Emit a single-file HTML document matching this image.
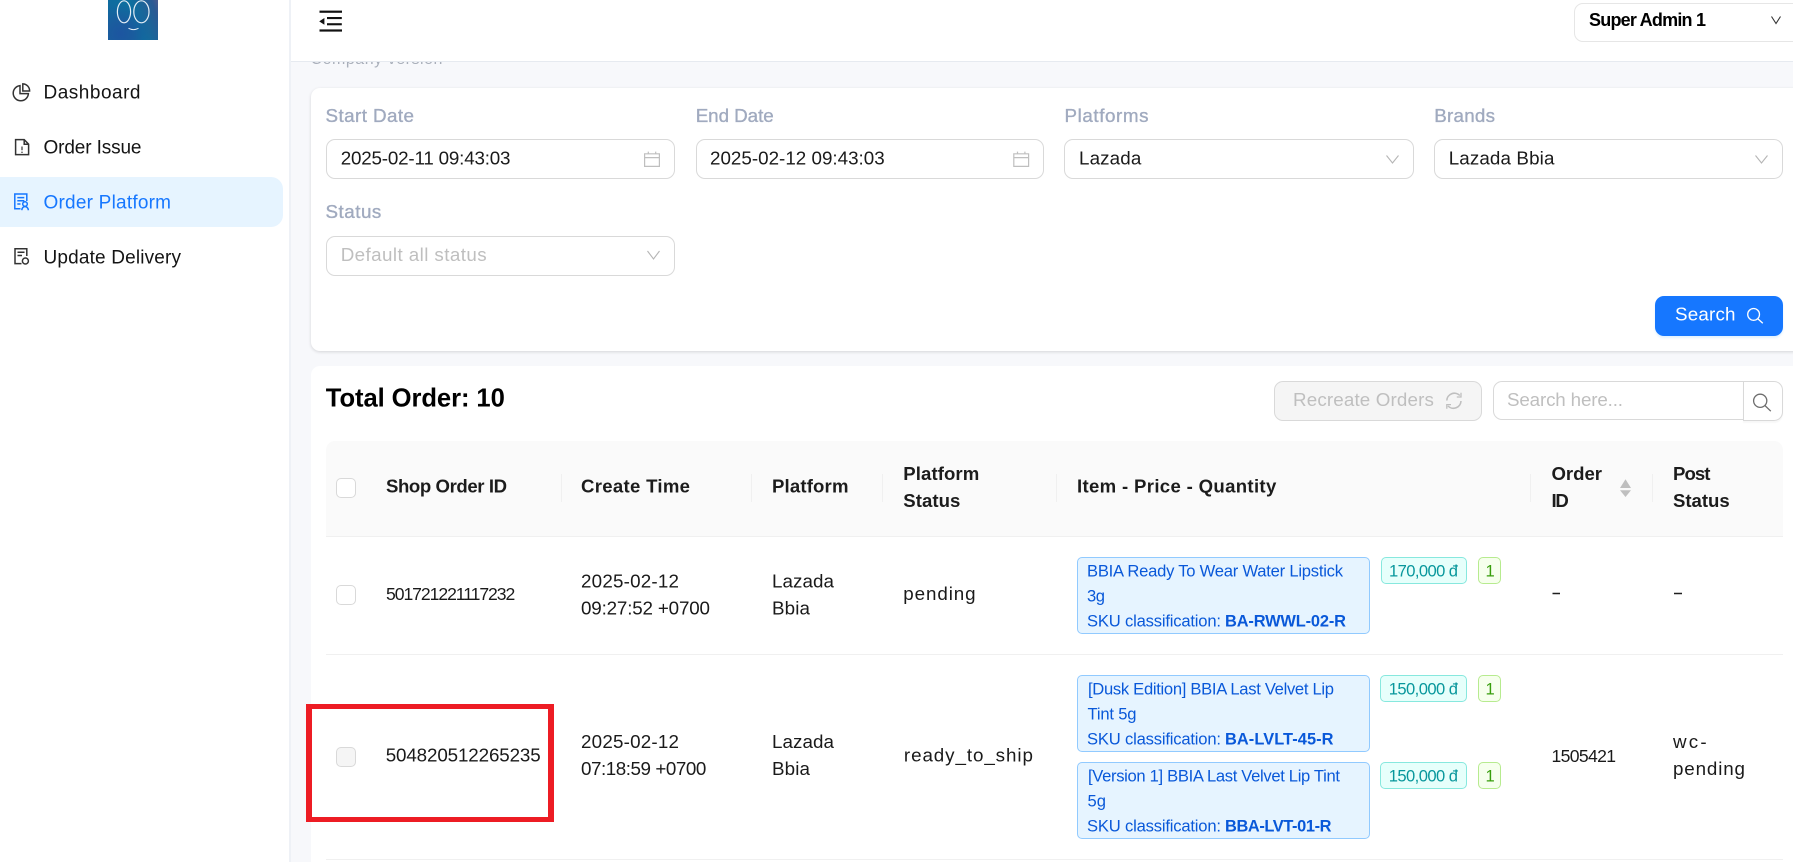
<!DOCTYPE html>
<html lang="en">
<head>
<meta charset="utf-8">
<title>Order Platform</title>
<style>
html,body{margin:0;padding:0;width:1793px;height:862px;overflow:hidden;background:#f7f8fb;font-family:"Liberation Sans",sans-serif}
#page{position:relative;width:1793px;height:862px;overflow:hidden;background:#f7f8fb}
.b{position:absolute;box-sizing:border-box}
.inp{background:#fff;border:1px solid #d9d9d9;border-radius:9px}
svg.layer{position:absolute;left:0;top:0;width:1793px;height:862px;font-family:"Liberation Sans",sans-serif}
svg text{white-space:pre}
.n{font-size:18.8px;fill:#1a1a1a}
.d{font-size:17.6px;fill:#1a1a1a}
.nav{font-size:19px;fill:#141414}
.lab{font-size:18.8px;fill:#a0aabf;stroke:#a0aabf;stroke-width:.35px}
.ph{font-size:18.8px;fill:#bfbfbf}
.h{font-size:18.6px;font-weight:bold;fill:#1c1c1c}
.it{font-size:16.6px;fill:#0958d9}
.itb{font-size:16.4px;font-weight:bold;fill:#0958d9}
.pr{font-size:16.6px;fill:#08979c}
.q{font-size:16.6px;fill:#389e0d}
</style>
</head>
<body>
<div id="page">
<!-- sidebar -->
<div class="b" style="left:0;top:0;width:291px;height:862px;background:#fff;border-right:2px solid #eef1f6"></div>
<div class="b" style="left:0;top:177px;width:283px;height:50px;background:#e6f4ff;border-radius:0 12px 12px 0"></div>
<div class="b" style="left:108px;top:0;width:50px;height:40px;background:radial-gradient(circle at 25% 85%,#1c55a0 0,#1a5c9e 25%,transparent 60%),linear-gradient(70deg,#10689f 0,#0d709f 55%,#2a5a94 90%,#4a5a8e 100%)"></div>
<!-- clipped text under the header -->
<div class="b" style="left:310.5px;top:50.5px;font-size:16px;line-height:18px;letter-spacing:.53px;color:#a9afba;white-space:nowrap">Company version</div>
<!-- header -->
<div class="b" style="left:291px;top:0;width:1502px;height:62px;background:#fff;border-bottom:1px solid #e6eaf0"></div>
<div class="b inp" style="left:1574px;top:3px;width:240px;height:39px;border-color:#e6e6e6"></div>
<!-- filter card -->
<div class="b" style="left:310.5px;top:88px;width:1500px;height:263px;background:#fff;border-radius:9px;box-shadow:0 1px 3px rgba(0,0,0,.14)"></div>
<div class="b inp" style="left:326px;top:139px;width:349px;height:40px"></div>
<div class="b inp" style="left:695.5px;top:139px;width:348.5px;height:40px"></div>
<div class="b inp" style="left:1064px;top:139px;width:350px;height:40px"></div>
<div class="b inp" style="left:1434px;top:139px;width:349px;height:40px"></div>
<div class="b inp" style="left:326px;top:236px;width:349px;height:40px"></div>
<div class="b" style="left:1655px;top:296px;width:128px;height:40px;background:#1677ff;border-radius:9px;box-shadow:0 2px 2px rgba(5,145,255,.12)"></div>
<!-- table card -->
<div class="b" style="left:310.5px;top:366px;width:1500px;height:496px;background:#fff;border-radius:9px 9px 0 0"></div>
<div class="b" style="left:1273.5px;top:381px;width:208px;height:40px;background:#f5f5f5;border:1px solid #d9d9d9;border-radius:9px"></div>
<div class="b inp" style="left:1492.5px;top:381px;width:252px;height:39px;border-radius:9px 0 0 9px"></div>
<div class="b inp" style="left:1743px;top:381px;width:39.5px;height:40px;border-radius:0 9px 9px 0;box-shadow:0 2px 1px rgba(0,0,0,.03)"></div>
<div class="b" style="left:326px;top:441px;width:1457px;height:96px;background:#fafafa;border-radius:9px 9px 0 0;border-bottom:1px solid #f0f0f0"></div>
<div class="b" style="left:326px;top:654px;width:1457px;height:1px;background:#f0f0f0"></div>
<div class="b" style="left:326px;top:859px;width:1457px;height:1px;background:#f0f0f0"></div>
<div class="b" style="left:561px;top:474px;width:1px;height:28px;background:#f0f0f0"></div>
<div class="b" style="left:751px;top:474px;width:1px;height:28px;background:#f0f0f0"></div>
<div class="b" style="left:882px;top:474px;width:1px;height:28px;background:#f0f0f0"></div>
<div class="b" style="left:1056px;top:474px;width:1px;height:28px;background:#f0f0f0"></div>
<div class="b" style="left:1530px;top:474px;width:1px;height:28px;background:#f0f0f0"></div>
<div class="b" style="left:1652px;top:474px;width:1px;height:28px;background:#f0f0f0"></div>
<!-- checkboxes -->
<div class="b" style="left:336px;top:478px;width:20px;height:20px;background:#fff;border:1px solid #d9d9d9;border-radius:5px"></div>
<div class="b" style="left:336px;top:585px;width:20px;height:20px;background:#fff;border:1px solid #d9d9d9;border-radius:5px"></div>
<div class="b" style="left:336px;top:747px;width:20px;height:20px;background:#f5f5f5;border:1px solid #d9d9d9;border-radius:5px"></div>
<!-- item tags -->
<div class="b" style="left:1077px;top:557px;width:293px;height:77px;background:#e6f4ff;border:1px solid #91caff;border-radius:5px"></div>
<div class="b" style="left:1380.5px;top:557px;width:86px;height:26.5px;background:#e6fffb;border:1px solid #87e8de;border-radius:5px"></div>
<div class="b" style="left:1477.5px;top:557px;width:23px;height:26.5px;background:#f6ffed;border:1px solid #b7eb8f;border-radius:5px"></div>
<div class="b" style="left:1077px;top:675px;width:292.5px;height:77px;background:#e6f4ff;border:1px solid #91caff;border-radius:5px"></div>
<div class="b" style="left:1380px;top:675px;width:86.5px;height:27px;background:#e6fffb;border:1px solid #87e8de;border-radius:5px"></div>
<div class="b" style="left:1477.5px;top:675px;width:23px;height:27px;background:#f6ffed;border:1px solid #b7eb8f;border-radius:5px"></div>
<div class="b" style="left:1077px;top:762px;width:292.5px;height:77px;background:#e6f4ff;border:1px solid #91caff;border-radius:5px"></div>
<div class="b" style="left:1380px;top:762px;width:86.5px;height:27px;background:#e6fffb;border:1px solid #87e8de;border-radius:5px"></div>
<div class="b" style="left:1477.5px;top:762px;width:23px;height:27px;background:#f6ffed;border:1px solid #b7eb8f;border-radius:5px"></div>

<svg class="layer" viewBox="0 0 1793 862" xmlns="http://www.w3.org/2000/svg">
  <!-- logo -->
  <g fill="none" stroke="#e4eef6" stroke-width="1.2">
    <ellipse cx="124" cy="11.8" rx="6.6" ry="11"/>
    <ellipse cx="141.4" cy="11.8" rx="7.6" ry="11"/>
    <path d="M128.5 28.3q5 2.6 10 0" stroke-width="1"/>
  </g>
  <!-- nav icons -->
  <g fill="none" stroke="#333" stroke-width="1.5">
    <path d="M20 85.6A7.6 7.6 0 1 0 28.4 93.6H20Z"/>
    <path d="M22.8 83.9A6.9 6.9 0 0 1 29.6 91H22.8Z"/>
    <path d="M15.6 139.6H24.2L28.6 144.2V154.6H15.6ZM24.2 139.6V144.2H28.6"/>
    <path d="M22 146.5V150.3M22 151.6V153" stroke-width="1.2"/>
    <path d="M26.8 256V248.7H15V263.6H21.5M17.5 252.3H24.5M17.5 255.5H22"/>
    <circle cx="25.4" cy="261" r="3"/>
  </g>
  <g fill="none" stroke="#1677ff" stroke-width="1.5">
    <path d="M26.8 201V194H14.8V208.8H20.5M17.3 197.6H24.3M17.3 200.8H24.3M17.3 204H20.5"/>
    <circle cx="25" cy="204" r="2.3"/>
    <path d="M21.8 210.2Q22.2 206.6 25 206.6T28.4 210.2"/>
  </g>
  <!-- hamburger -->
  <g fill="#111">
    <rect x="319.5" y="10.6" width="22.5" height="2.2"/>
    <rect x="327" y="17" width="14.8" height="2.1"/>
    <rect x="327" y="23.2" width="14.8" height="2.1"/>
    <rect x="319.5" y="29.4" width="22.5" height="2.2"/>
    <path d="M324.4 18V24.8L319.2 21.4Z"/>
  </g>
  <!-- nav text -->
  <text class="nav" x="43.5" y="98.3" textLength="97">Dashboard</text>
  <text class="nav" x="43.5" y="153.3" textLength="98">Order Issue</text>
  <text class="nav" x="43.5" y="208.3" textLength="127.5" style="fill:#1677ff">Order Platform</text>
  <text class="nav" x="43.5" y="263.3" textLength="137.5">Update Delivery</text>
  <!-- top right -->
  <text x="1589" y="26" font-size="18" font-weight="bold" fill="#000" textLength="117">Super Admin 1</text>
  <path d="M1771.5 16.5L1776 23.5L1780.5 16.5" fill="none" stroke="#333" stroke-width="1.1"/>
  <!-- labels -->
  <text class="lab" x="325.5" y="122" textLength="88.5">Start Date</text>
  <text class="lab" x="695.7" y="122" textLength="78">End Date</text>
  <text class="lab" x="1064.5" y="122" textLength="84">Platforms</text>
  <text class="lab" x="1434.3" y="122" textLength="60.7">Brands</text>
  <text class="lab" x="325.5" y="218" textLength="55.8">Status</text>
  <!-- inputs -->
  <text class="n" x="340.7" y="164.3" textLength="169.8">2025-02-11 09:43:03</text>
  <text class="n" x="710" y="164.3" textLength="174.7">2025-02-12 09:43:03</text>
  <text class="n" x="1079" y="164.3" textLength="62.3">Lazada</text>
  <text class="n" x="1448.7" y="164.3" textLength="105.7">Lazada Bbia</text>
  <text class="ph" x="340.7" y="261" textLength="145.9">Default all status</text>
  <!-- calendar icons -->
  <g fill="none" stroke="#bfbfbf" stroke-width="1.2">
    <path d="M644.6 153.8H659.4V166.4H644.6ZM644.6 157.6H659.4M648.3 151.6V153.8M655.7 151.6V153.8"/>
    <path d="M1013.8 153.8H1028.6V166.4H1013.8ZM1013.8 157.6H1028.6M1017.5 151.6V153.8M1024.9 151.6V153.8"/>
  </g>
  <!-- chevrons -->
  <g fill="none" stroke="#b5b5b5" stroke-width="1.1">
    <path d="M1386.5 155.5L1392.5 163L1398.5 155.5"/>
    <path d="M1755.5 155.5L1761.5 163L1767.5 155.5"/>
    <path d="M647.5 251L653.5 259L659.5 251"/>
  </g>
  <!-- search button -->
  <text x="1675" y="320.5" font-size="18.8" fill="#fff" textLength="60.5">Search</text>
  <g fill="none" stroke="#fff" stroke-width="1.3">
    <circle cx="1753.6" cy="314.4" r="5.9"/>
    <path d="M1757.8 318.8L1762.8 323.2"/>
  </g>
  <!-- total -->
  <text x="325.8" y="406.7" font-size="25.6" font-weight="bold" fill="#000" textLength="179">Total Order: 10</text>
  <text class="ph" x="1293" y="406" textLength="140.9">Recreate Orders</text>
  <g fill="none" stroke="#bfbfbf" stroke-width="1.6">
    <path d="M1446.8 400.5A7.6 7.6 0 0 1 1459.8 395.5M1461 401A7.6 7.6 0 0 1 1448 406"/>
    <path d="M1461 392.8V397H1456.8M1446.8 408.8V404.6H1451" stroke-width="1.3"/>
  </g>
  <text class="ph" x="1507" y="406" textLength="116">Search here...</text>
  <g fill="none" stroke="#6e6e6e" stroke-width="1.3">
    <circle cx="1760.2" cy="400.8" r="6.6"/>
    <path d="M1765 405.6L1770.8 411.2"/>
  </g>
  <!-- header cells -->
  <text class="h" x="386" y="492.7" textLength="121">Shop Order ID</text>
  <text class="h" x="581" y="492.7" textLength="109">Create Time</text>
  <text class="h" x="772" y="492.7" textLength="76.5">Platform</text>
  <text class="h" x="903.3" y="480" textLength="76">Platform</text>
  <text class="h" x="903.3" y="507" textLength="57">Status</text>
  <text class="h" x="1077" y="492.7" textLength="199.3">Item - Price - Quantity</text>
  <text class="h" x="1551.5" y="480" textLength="50.5">Order</text>
  <text class="h" x="1551.5" y="507" textLength="17.3">ID</text>
  <text class="h" x="1673" y="480" textLength="37.5">Post</text>
  <text class="h" x="1673" y="507" textLength="56.7">Status</text>
  <path d="M1625.5 479.3L1631 488H1620ZM1620 490.3H1631L1625.5 497Z" fill="#bfbfbf"/>
  <!-- row 1 -->
  <text class="d" x="386" y="600" textLength="129.3">501721221117232</text>
  <text class="n" x="581" y="587.3" textLength="98">2025-02-12</text>
  <text class="n" x="581" y="614.3" textLength="129">09:27:52 +0700</text>
  <text class="n" x="772" y="587.3" textLength="62">Lazada</text>
  <text class="n" x="772" y="614.3" textLength="38">Bbia</text>
  <text class="n" x="903.3" y="600" textLength="72.3">pending</text>
  <text class="it" x="1087" y="576.3" textLength="256">BBIA Ready To Wear Water Lipstick</text>
  <text class="it" x="1087" y="601.7" textLength="18">3g</text>
  <text class="it" x="1087" y="626.3" textLength="134">SKU classification:</text>
  <text class="itb" x="1225" y="626.3" textLength="121">BA-RWWL-02-R</text>
  <text class="pr" x="1389" y="576.3" textLength="69">170,000 đ</text>
  <text class="q" x="1485.5" y="576.3">1</text>
  <path d="M1552.5 593.5H1560M1674 593.5H1682" stroke="#1f1f1f" stroke-width="1.4"/>
  <!-- row 2 -->
  <text class="n" x="385.7" y="761.7" textLength="155">504820512265235</text>
  <text class="n" x="581" y="748" textLength="98">2025-02-12</text>
  <text class="n" x="581" y="775" textLength="125.3">07:18:59 +0700</text>
  <text class="n" x="772" y="748" textLength="62">Lazada</text>
  <text class="n" x="772" y="775" textLength="38">Bbia</text>
  <text class="n" x="903.9" y="761.7" textLength="129">ready_to_ship</text>
  <text class="it" x="1088" y="694.3" textLength="246">[Dusk Edition] BBIA Last Velvet Lip</text>
  <text class="it" x="1087.5" y="719.7" textLength="49">Tint 5g</text>
  <text class="it" x="1087" y="744.7" textLength="134">SKU classification:</text>
  <text class="itb" x="1225" y="744.7" textLength="108.5">BA-LVLT-45-R</text>
  <text class="pr" x="1388.7" y="694.3" textLength="69.3">150,000 đ</text>
  <text class="q" x="1485.5" y="694.3">1</text>
  <text class="it" x="1088" y="781.3" textLength="252">[Version 1] BBIA Last Velvet Lip Tint</text>
  <text class="it" x="1087.5" y="806.7" textLength="18.5">5g</text>
  <text class="it" x="1087" y="831.3" textLength="134">SKU classification:</text>
  <text class="itb" x="1225" y="831.3" textLength="106.5">BBA-LVT-01-R</text>
  <text class="pr" x="1388.7" y="781.3" textLength="69.3">150,000 đ</text>
  <text class="q" x="1485.5" y="781.3">1</text>
  <text class="d" x="1551.5" y="762" textLength="64.5">1505421</text>
  <text class="n" x="1673" y="748" textLength="33.7">wc-</text>
  <text class="n" x="1673" y="775" textLength="72">pending</text>
</svg>
<!-- red annotation -->
<div class="b" style="left:306px;top:704px;width:248px;height:117.5px;border:solid #ed1c24;border-width:5.5px 6px"></div>
</div>
</body>
</html>
